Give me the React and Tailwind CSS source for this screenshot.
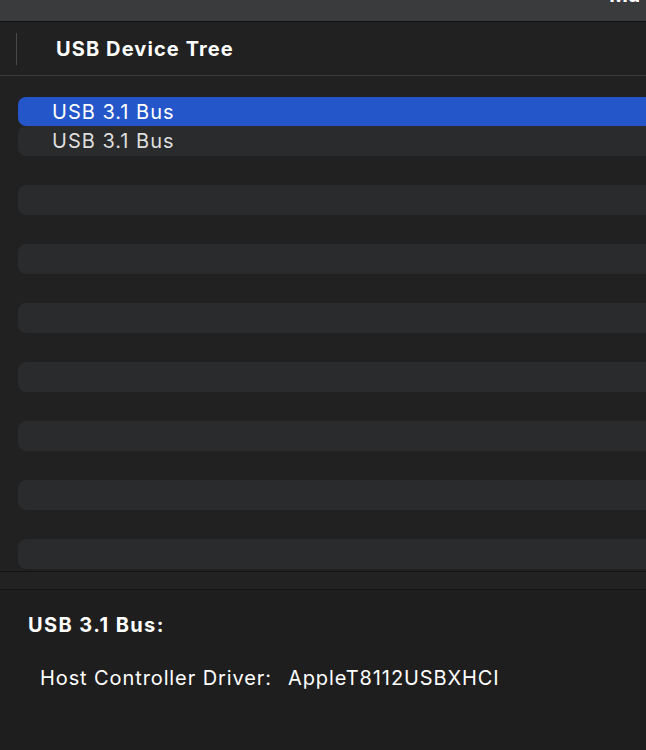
// System Information style panel: USB device tree + detail pane

const rows = Array.from({ length: 16 }, (_, i) => i);

function Row({ index, label }) {
  const selected = index === 0;
  const striped = index % 2 === 1;
  const h = index % 2 === 0 ? 'h-[29px]' : 'h-[30px]';
  let bg = 'bg-transparent';
  if (selected) bg = 'bg-[#2456c9]';
  else if (striped) bg = 'bg-[#2a2b2d]';
  return (
    <div className={`${h} ${bg} rounded-l-[8px] flex items-center pl-[34px]`}>
      {label && (
        <span
          className={`text-[20px] leading-none tracking-[0.05em] ${selected ? 'text-white' : 'text-[#dedede]'}`}
        >
          {label}
        </span>
      )}
    </div>
  );
}

export default function App() {
  return (
    <div
      className="w-[646px] h-[750px] overflow-hidden bg-[#1e1e1e] flex flex-col"
      style={{ fontFamily: 'Inter, "Noto Sans", sans-serif' }}
    >
      {/* title bar */}
      <div className="h-[22px] shrink-0 bg-[#3a3b3d] border-b border-[#121212] flex justify-end overflow-hidden">
        <span className="text-white font-bold text-[20px] leading-none tracking-[0.04em] -mt-[15px] mr-[5px]">
          Ma
        </span>
      </div>

      {/* column header */}
      <div className="h-[53px] shrink-0 bg-[#212121] flex items-center">
        <div className="ml-[16px] w-px h-[32px] bg-[#4a4a4a]" />
        <span className="ml-[39px] text-white font-bold text-[20px] leading-none tracking-[0.055em]">
          USB Device Tree
        </span>
      </div>
      <div className="h-px shrink-0 bg-[#3b3b3b]" />

      {/* tree list */}
      <div className="h-[495px] shrink-0 bg-[#212121] pt-[21px] pl-[18px] flex flex-col">
        {rows.map((i) => (
          <Row key={i} index={i} label={i < 2 ? 'USB 3.1 Bus' : null} />
        ))}
      </div>
      <div className="h-px shrink-0 bg-[#141414]" />
      <div className="h-[17px] shrink-0 bg-[#222222]" />
      <div className="h-px shrink-0 bg-[#161616]" />

      {/* detail pane */}
      <div className="flex-1 bg-[#1e1e1e] pt-[25px] pl-[28px]">
        <div className="text-white font-bold text-[20px] leading-none tracking-[0.07em]">USB 3.1 Bus:</div>
        <div className="mt-[33px] ml-[12px] flex text-white text-[20px] leading-none tracking-[0.045em]">
          <span className="w-[248px]">Host Controller Driver:</span>
          <span>AppleT8112USBXHCI</span>
        </div>
      </div>
    </div>
  );
}
